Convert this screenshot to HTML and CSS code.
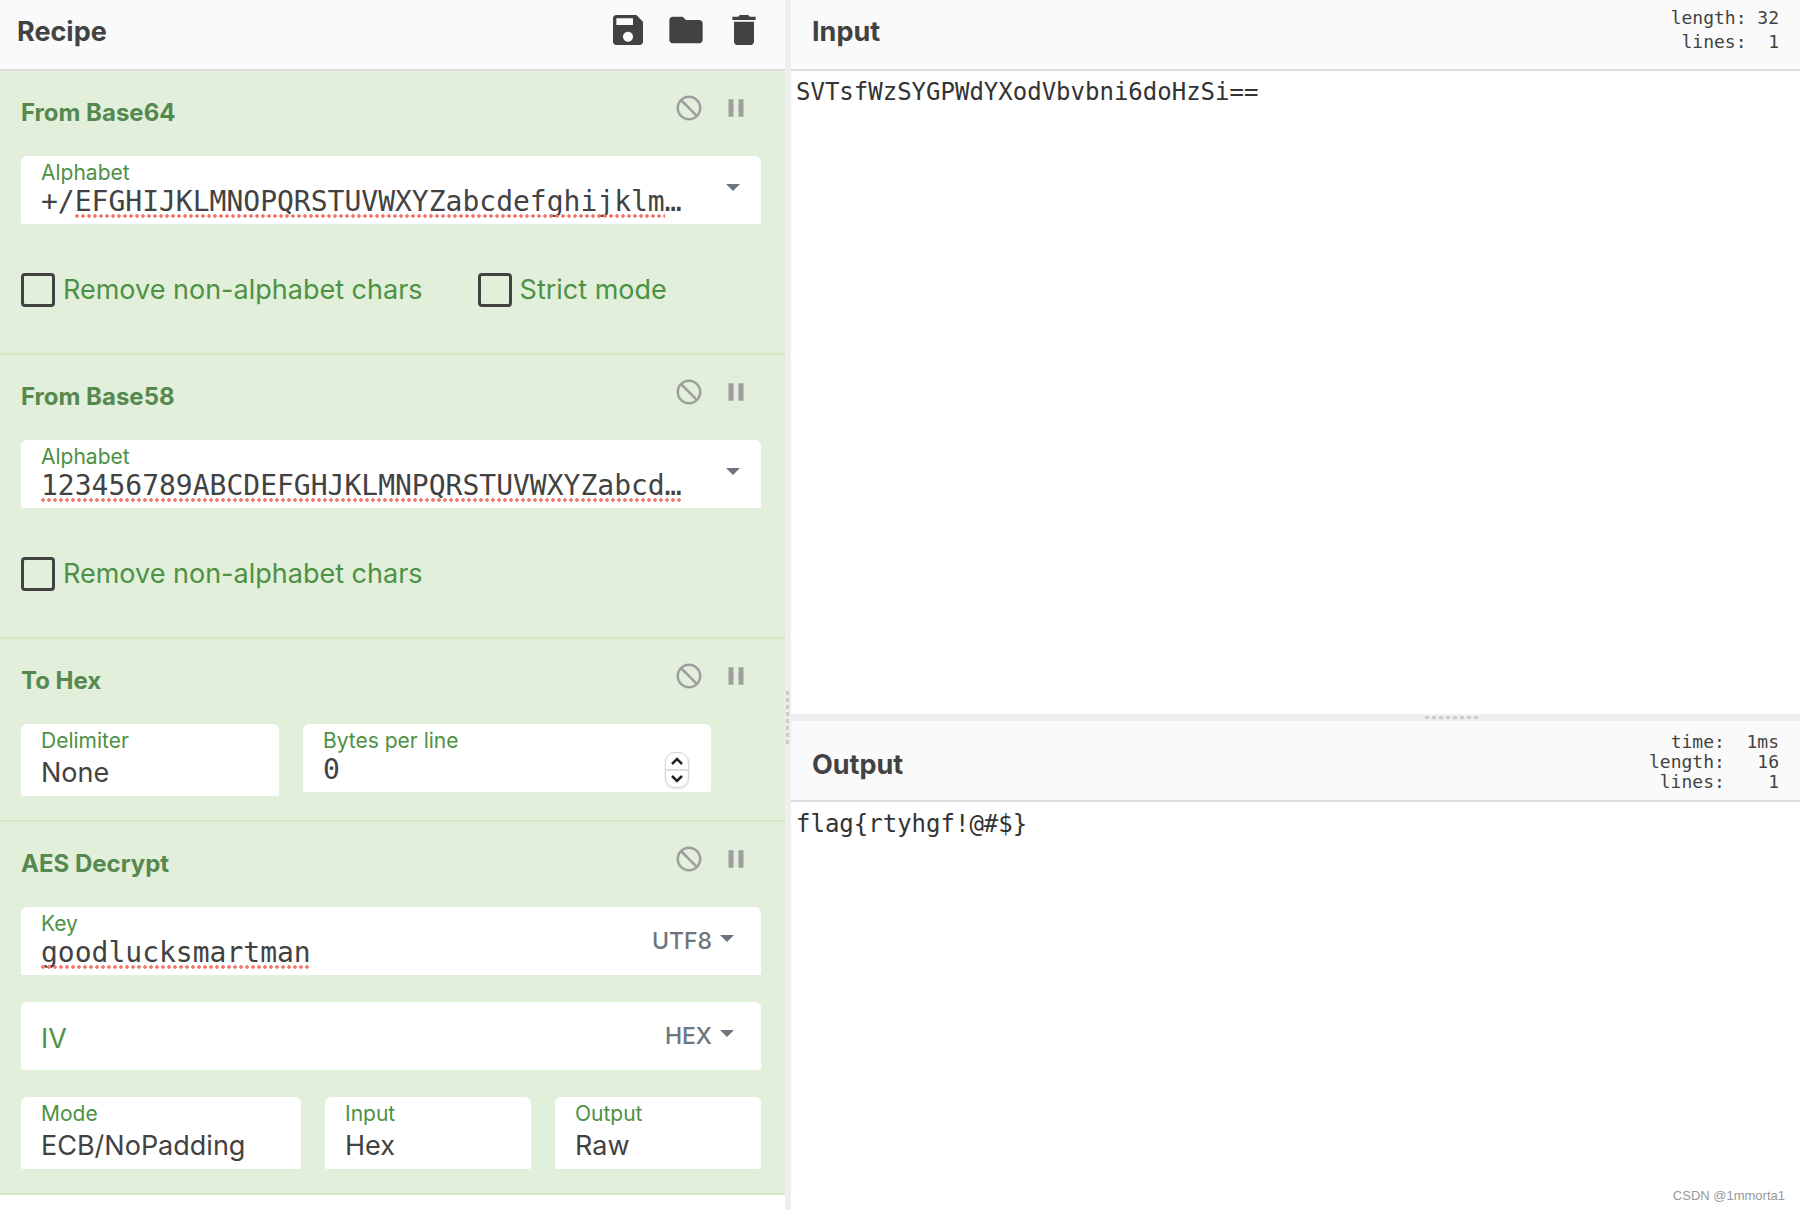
FILE: index.html
```html
<!DOCTYPE html>
<html lang="en">
<head>
<meta charset="utf-8">
<title>Recipe</title>
<link rel="stylesheet" href="styles.css">
</head>
<body>
<svg class="sprite" aria-hidden="true">
  <symbol id="save" viewBox="0 0 24 24"><path d="M17 3H5c-1.110 0-2 .9-2 2v14c0 1.100.890 2 2 2h14c1.100 0 2-.9 2-2V7l-4-4zm-5 16c-1.660 0-3-1.340-3-3s1.340-3 3-3 3 1.340 3 3-1.340 3-3 3zm3-10H5V5h10v4z"/></symbol>
  <symbol id="folder" viewBox="0 0 24 24"><path d="M10 4H4c-1.100 0-1.990.9-1.990 2L2 18c0 1.100.9 2 2 2h16c1.100 0 2-.9 2-2V8c0-1.100-.9-2-2-2h-8l-2-2z"/></symbol>
  <symbol id="trash" viewBox="0 0 24 24"><path d="M6 19c0 1.100.9 2 2 2h8c1.100 0 2-.9 2-2V7H6v12zM19 4h-3.500l-1-1h-5l-1 1H5v2h14V4z"/></symbol>
  <symbol id="block" viewBox="0 0 24 24"><path d="M12 2C6.480 2 2 6.480 2 12s4.480 10 10 10 10-4.480 10-10S17.520 2 12 2zM4 12c0-4.420 3.580-8 8-8 1.850 0 3.550.630 4.900 1.690L5.690 16.900C4.630 15.550 4 13.850 4 12zm8 8c-1.850 0-3.550-.630-4.900-1.690L18.310 7.100C19.370 8.450 20 10.150 20 12c0 4.420-3.580 8-8 8z" transform="matrix(-1 0 0 1 24 0)"/></symbol>
  <symbol id="pause" viewBox="0 0 24 24"><path d="M6 19h4V5H6v14zm8-14v14h4V5h-4z"/></symbol>
</svg>
<div class="workspace">
  <section class="pane recipe">
    <header class="bar">
      <h1 class="bar-title">Recipe</h1>
      <div class="bar-tools">
        <button type="button" aria-label="Save recipe"><svg class="icon-lg"><use href="#save"/></svg></button>
        <button type="button" aria-label="Load recipe"><svg class="icon-lg"><use href="#folder"/></svg></button>
        <button type="button" aria-label="Clear recipe"><svg class="icon-lg"><use href="#trash"/></svg></button>
      </div>
    </header>

    <article class="op">
      <div class="op-head">
        <h2 class="op-title">From Base64</h2>
        <div class="op-tools">
          <button type="button" aria-label="Disable"><svg class="icon"><use href="#block"/></svg></button>
          <button type="button" aria-label="Breakpoint"><svg class="icon"><use href="#pause"/></svg></button>
        </div>
      </div>
      <div class="field">
        <div class="field-main">
          <label class="field-label" for="a64">Alphabet</label>
          <input class="field-input" id="a64" type="text" spellcheck="false" value="+/EFGHIJKLMNOPQRSTUVWXYZabcdefghijklm…">
          <span class="spelling" style="--from:2;--chars:35"></span>
        </div>
        <button class="field-menu" type="button" aria-label="Choose alphabet"><span class="caret"></span></button>
      </div>
      <div class="checks">
        <label class="check"><input type="checkbox">Remove non-alphabet chars</label>
        <label class="check"><input type="checkbox">Strict mode</label>
      </div>
    </article>

    <article class="op">
      <div class="op-head">
        <h2 class="op-title">From Base58</h2>
        <div class="op-tools">
          <button type="button" aria-label="Disable"><svg class="icon"><use href="#block"/></svg></button>
          <button type="button" aria-label="Breakpoint"><svg class="icon"><use href="#pause"/></svg></button>
        </div>
      </div>
      <div class="field">
        <div class="field-main">
          <label class="field-label" for="a58">Alphabet</label>
          <input class="field-input" id="a58" type="text" spellcheck="false" value="123456789ABCDEFGHJKLMNPQRSTUVWXYZabcd…">
          <span class="spelling" style="--from:0;--chars:38"></span>
        </div>
        <button class="field-menu" type="button" aria-label="Choose alphabet"><span class="caret"></span></button>
      </div>
      <div class="checks">
        <label class="check"><input type="checkbox">Remove non-alphabet chars</label>
      </div>
    </article>

    <article class="op">
      <div class="op-head">
        <h2 class="op-title">To Hex</h2>
        <div class="op-tools">
          <button type="button" aria-label="Disable"><svg class="icon"><use href="#block"/></svg></button>
          <button type="button" aria-label="Breakpoint"><svg class="icon"><use href="#pause"/></svg></button>
        </div>
      </div>
      <div class="fields fields-hex">
        <div class="field field-choice">
          <div class="field-main">
            <label class="field-label" for="delim">Delimiter</label>
            <select class="field-select" id="delim"><option>None</option></select>
          </div>
        </div>
        <div class="field">
          <div class="field-main">
            <label class="field-label" for="bytes">Bytes per line</label>
            <input class="field-input" id="bytes" type="number" value="0">
          </div>
          <div class="stepper">
            <button type="button" aria-label="Increase"><svg viewBox="0 0 12 8"><path d="M1 7l5-5 5 5"/></svg></button>
            <button type="button" aria-label="Decrease"><svg viewBox="0 0 12 8"><path d="M1 1l5 5 5-5"/></svg></button>
          </div>
        </div>
      </div>
    </article>

    <article class="op">
      <div class="op-head">
        <h2 class="op-title">AES Decrypt</h2>
        <div class="op-tools">
          <button type="button" aria-label="Disable"><svg class="icon"><use href="#block"/></svg></button>
          <button type="button" aria-label="Breakpoint"><svg class="icon"><use href="#pause"/></svg></button>
        </div>
      </div>
      <div class="stack">
        <div class="field">
          <div class="field-main">
            <label class="field-label" for="key">Key</label>
            <input class="field-input" id="key" type="text" spellcheck="false" value="goodlucksmartman">
            <span class="spelling" style="--from:0;--chars:16"></span>
          </div>
          <button class="field-menu field-menu-text" type="button">UTF8<span class="caret"></span></button>
        </div>
        <div class="field">
          <input class="field-empty" type="text" aria-label="IV" placeholder="IV">
          <button class="field-menu field-menu-text" type="button">HEX<span class="caret"></span></button>
        </div>
        <div class="fields fields-aes">
          <div class="field field-choice">
            <div class="field-main">
              <label class="field-label" for="mode">Mode</label>
              <select class="field-select" id="mode"><option>ECB/NoPadding</option></select>
            </div>
          </div>
          <div class="field field-choice">
            <div class="field-main">
              <label class="field-label" for="in">Input</label>
              <select class="field-select" id="in"><option>Hex</option></select>
            </div>
          </div>
          <div class="field field-choice">
            <div class="field-main">
              <label class="field-label" for="out">Output</label>
              <select class="field-select" id="out"><option>Raw</option></select>
            </div>
          </div>
        </div>
      </div>
    </article>
  </section>

  <div class="gutter gutter-v"><span class="grip"></span></div>

  <div class="io">
    <section class="pane io-input">
      <header class="bar">
        <h1 class="bar-title"><label for="input">Input</label></h1>
        <dl class="stats">
          <dt>length:</dt><dd>32</dd>
          <dt>lines:</dt><dd>1</dd>
        </dl>
      </header>
      <textarea class="text" id="input" spellcheck="false">SVTsfWzSYGPWdYXodVbvbni6doHzSi==</textarea>
    </section>
    <div class="gutter gutter-h"><span class="grip"></span></div>
    <section class="pane io-output">
      <header class="bar bar-output">
        <h1 class="bar-title"><label for="output">Output</label></h1>
        <dl class="stats stats-output">
          <dt>time:</dt><dd>1ms</dd>
          <dt>length:</dt><dd>16</dd>
          <dt>lines:</dt><dd>1</dd>
        </dl>
      </header>
      <textarea class="text" id="output" spellcheck="false" readonly>flag{rtyhgf!@#$}</textarea>
    </section>
  </div>
</div>
<div class="watermark">CSDN @1mmorta1</div>
</body>
</html>
```
FILE: styles.css
```css
:root {
  --sans: Inter, "Liberation Sans", sans-serif;
  --mono: "DejaVu Sans Mono", "Liberation Mono", monospace;
  --ink: #424242;
  --green: #4d9144;
  --slate: #6c757d;
}

* { box-sizing: border-box; }

body {
  margin: 0;
  background: #fff;
  color: var(--ink);
  font-family: var(--sans);
}

h1, h2, dl, dd { margin: 0; }

button, input, select, textarea {
  margin: 0;
  padding: 0;
  border: 0;
  border-radius: 0;
  outline: 0;
  background: none;
  color: inherit;
  font-family: inherit;
}

.sprite { position: absolute; width: 0; height: 0; }

.workspace {
  display: grid;
  grid-template-columns: 785fr 6px 1009fr;
  min-height: 100vh;
}

.pane { display: flex; flex-direction: column; min-width: 0; }

/* Title bars */
.bar {
  display: flex;
  justify-content: space-between;
  align-items: center;
  padding: 0 21px 9px 21px;
  border-bottom: 2px solid #ddd;
  background: #fafafa;
}

.bar-title {
  padding-top: 3px;
  font-size: 27px;
  font-weight: 700;
  line-height: 57px;
}

.recipe .bar { padding-left: 17px; }
.bar-output { padding: 11px 21px 8px; }
.bar-output .bar-title { padding-top: 5px; line-height: 55px; }

.bar-tools { display: flex; gap: 18px; }
.bar-tools button, .op-tools button { display: block; }

.icon-lg { display: block; width: 40px; height: 40px; fill: var(--ink); }
.icon { display: block; width: 30px; height: 30px; fill: #9e9e9e; }

.stats {
  display: grid;
  grid-template-columns: auto auto;
  column-gap: 1ch;
  font: 18px/24px var(--mono);
  text-align: right;
}

.stats-output { column-gap: 2ch; line-height: 20px; }

/* Operations */
.op {
  padding: 22px 24px 24px 21px;
  border-bottom: 2px solid #d8e6c3;
  background: #e2efda;
}

.op-head {
  display: flex;
  justify-content: space-between;
  align-items: flex-start;
  margin-bottom: 28px;
}

.op-title {
  padding-top: 5px;
  color: #55894f;
  font-size: 24px;
  font-weight: 700;
  line-height: 30px;
}

.op-tools { display: flex; gap: 17px; padding-right: 10px; }

.stack { display: grid; gap: 27px; }
.fields { display: grid; gap: 24px; align-items: start; }
.fields-hex { grid-template-columns: 258fr 408fr 26fr; }
.fields-aes { grid-template-columns: 280fr 206fr 206fr; }

.field {
  display: flex;
  min-width: 0;
  height: 68px;
  border-radius: 6px 6px 2px 2px;
  background: #fff;
}

.field-choice { height: 72px; }

.field-main {
  display: flex;
  flex: 1;
  flex-direction: column;
  min-width: 0;
  padding: 4px 0 0 20px;
}

.field-label {
  color: var(--green);
  font-size: 21px;
  line-height: 26px;
}

.field-input {
  width: 100%;
  height: 32px;
  font: 28px/32px var(--mono);
  appearance: textfield;
}

.field-input::-webkit-inner-spin-button { appearance: none; margin: 0; }

.field-select {
  width: 100%;
  height: 34px;
  margin-top: 2px;
  font-size: 27px;
  line-height: 34px;
  appearance: none;
}

.field-empty {
  flex: 1;
  min-width: 0;
  padding: 4px 0 0 20px;
  font-size: 27px;
}

.field-empty::placeholder { color: var(--green); opacity: 1; }

/* Dotted line under words the spelling checker does not know */
.spelling {
  flex: none;
  width: calc(var(--chars) * 1ch);
  height: 4px;
  margin: -4px 0 0 calc(var(--from) * 1ch);
  background: radial-gradient(circle at 2px 2px, #f4776c 0 1.5px, transparent 2px) 0 0 / 6px 4px repeat-x;
  font: 28px/4px var(--mono);
}

.field-menu {
  display: flex;
  flex: none;
  align-items: center;
  gap: 8px;
  padding: 0 21px 0 18px;
  color: var(--slate);
  font-size: 23px;
  font-weight: 500;
}

.field-menu-text { padding-right: 27px; }

.caret {
  margin-bottom: 5px;
  border: 7px solid transparent;
  border-top-color: var(--slate);
  border-bottom: 0;
}

.stepper {
  display: flex;
  flex: none;
  flex-direction: column;
  width: 24px;
  height: 36px;
  margin: 28px 22px 0 0;
  border: 1px solid #d4d4d4;
  border-radius: 10px;
  box-shadow: 0 1px 2px #0002;
}

.stepper button { display: grid; flex: 1; place-items: center; }
.stepper button + button { border-top: 2px solid #ddd; }
.stepper svg { width: 12px; height: 8px; fill: none; stroke: #222; stroke-width: 2.5; }

.checks { display: flex; gap: 55px; padding: 49px 0 22px; }

.check {
  display: flex;
  align-items: center;
  gap: 8px;
  color: var(--green);
  font-size: 27px;
  line-height: 34px;
  white-space: nowrap;
}

.check input {
  width: 34px;
  height: 34px;
  border: 3px solid var(--ink);
  border-radius: 4px;
  appearance: none;
}

/* Split gutters */
.gutter { display: flex; align-items: center; justify-content: center; background: #eee; }

.gutter-v .grip {
  width: 3px;
  height: 53px;
  margin: 225px 1px 0 0;
  background: repeating-linear-gradient(#ccc 0 4px, transparent 4px 7px);
}

.gutter-h { height: 7px; }

.gutter-h .grip {
  width: 53px;
  height: 3px;
  margin-left: 312px;
  background: repeating-linear-gradient(90deg, #ccc 0 4px, transparent 4px 7px);
}

.io { display: flex; flex-direction: column; min-width: 0; }
.io-input { flex: 714 1 0; }
.io-output { flex: 489 1 0; }

.text {
  flex: 1;
  padding: 7px 5px;
  color: #333;
  font: 24px/28px var(--mono);
  resize: none;
}

.io-output .text { padding-top: 8px; }

.watermark {
  position: absolute;
  right: 15px;
  bottom: 6px;
  color: #999;
  font: 13px/16px "Liberation Sans", sans-serif;
}
```
